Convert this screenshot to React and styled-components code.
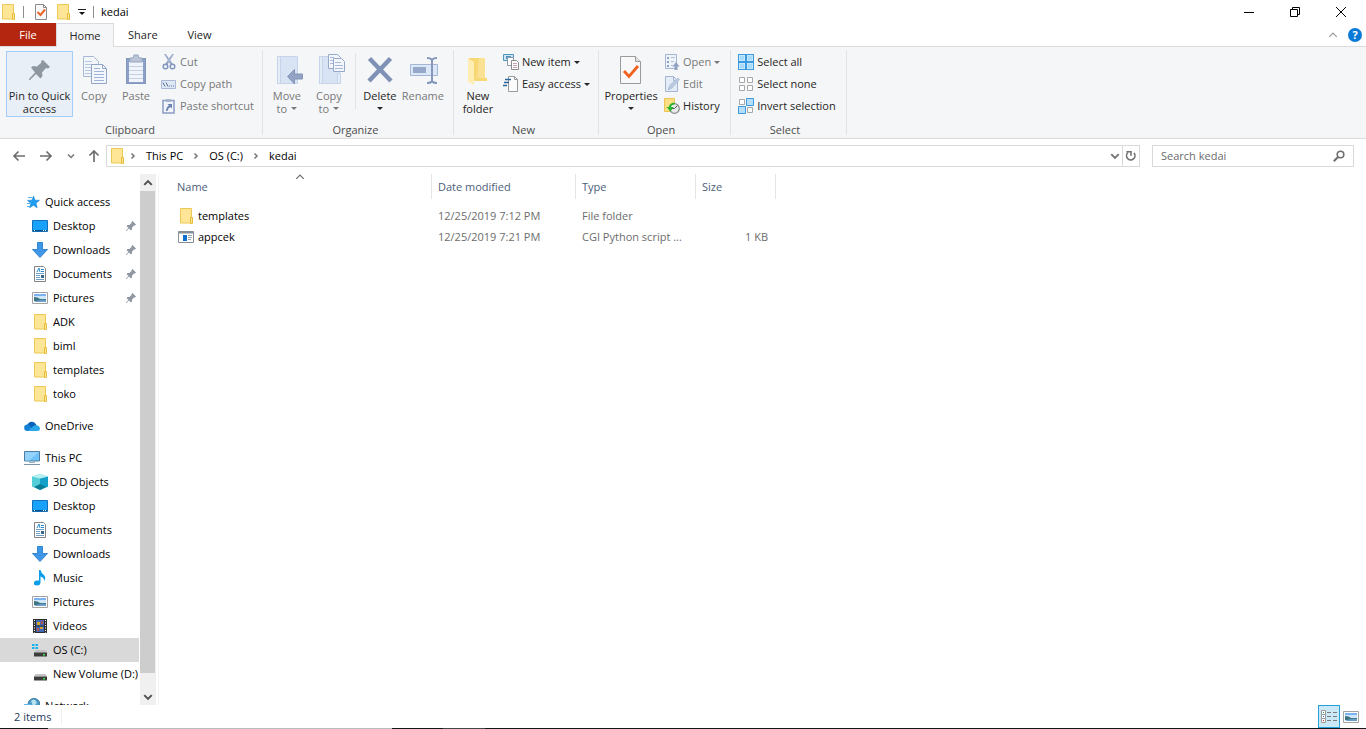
import React from 'react';
import styled, { createGlobalStyle } from 'styled-components';

/* ---------- icons ---------- */

const Svg = ({ w = 16, h = 16, children }) => (
    <svg width={w} height={h} viewBox={`0 0 ${w} ${h}`} fill="none" aria-hidden="true">{children}</svg>
);

const FolderIcon = () => (
    <Svg>
        <path d="M2.5 .5h11v14.5h-11z" fill="#ffe596" stroke="#ecc955" />
        <path d="M12.5 9.5h2v6h-2z" fill="#ffe596" stroke="#e6bc3a" />
    </Svg>
);

const PropsSmallIcon = () => (
    <Svg>
        <path d="M2.5 .5h8l3 3v12h-11z" fill="#f7f8fa" stroke="#8c8c8c" />
        <path d="M10.5 .5v3h3" stroke="#8c8c8c" />
        <path d="M4.5 8l3 3 4.5-5.5" stroke="#ec6526" strokeWidth="2" />
    </Svg>
);

const PinBigIcon = () => (
    <Svg w={32} h={32}>
        <path d="M19 6l7 7-2 1.5-2-.5-4 4.5.5 3.5-2 2.5-4.500-4.500-6 6H5v-1l6-6.500L7 13.500l2-1.500 4 .5 4.500-4L17 7z" fill="#8e979f" />
    </Svg>
);

const PinIcon = () => (
    <Svg w={12} h={12}>
        <path d="M7.5 1L11 4.5l-1 1H9L7 7.5v2l-1 1L4 8.5 1.5 11H1v-.5L3.5 8l-2-2 1-1h2l2-2V2z" fill="#8e979f" />
    </Svg>
);

const CopyIcon = () => (
    <Svg w={32} h={32}>
        <path d="M5.5 2.5h10l5 5v15h-15z" fill="#f3f7fc" stroke="#a8b8d4" />
        <path d="M7 7.5h7M7 10.5h7M7 13.5h6M7 16.5h6M7 19.5h6" stroke="#b4c6e0" />
        <path d="M13.5 10.5h11l4 4v15h-15z" fill="#f3f7fc" stroke="#93a6c8" />
        <path d="M24.5 10.5v4h4" stroke="#93a6c8" />
        <path d="M16 14.5h6M16 17.5h10M16 20.5h10M16 23.5h10M16 26.5h10" stroke="#9fb4d6" />
    </Svg>
);

const PasteIcon = () => (
    <Svg w={32} h={32}>
        <rect x="6.5" y="4.5" width="19" height="25" fill="#8ea2c8" stroke="#8396bd" />
        <path d="M9 8h14v20H9z" fill="#f1f5fb" />
        <path d="M9 12.5h14M9 16.5h14M9 20.5h14M9 24.5h14" stroke="#c3d1e8" />
        <path d="M10 4h3l1-3h4l1 3h3v4H10z" fill="#b9c4d6" stroke="#98a6c2" />
    </Svg>
);

const CutIcon = () => (
    <Svg>
        <path d="M3.5 0h1l7 10-1.5 1zM12.5 0h-1L4.500 10 6 11z" fill="#8c9fc2" stroke="#9aaccb" strokeWidth=".6" />
        <circle cx="4.5" cy="12.5" r="2.3" stroke="#8296be" strokeWidth="1.5" />
        <circle cx="11.5" cy="12.5" r="2.3" stroke="#8296be" strokeWidth="1.5" />
    </Svg>
);

const CopyPathIcon = () => (
    <Svg>
        <path d="M.5 4.5h14v8H.5z" fill="#dfe8f5" stroke="#a9b9d6" />
        <path d="M2 6.5l2 4M5 6.5l2 4M8 10h1M10 10h1M12 10h1" stroke="#5f7199" />
    </Svg>
);

const PasteShortcutIcon = () => (
    <Svg>
        <path d="M2 2.5h11V15H2z" fill="#f1f5fb" stroke="#8a9dc4" strokeWidth="1.5" />
        <path d="M5 1h5v3H5z" fill="#a5b3cc" />
        <path d="M6.5 6H11v4.5L9.500 9Q7 10 6.500 13H5q0-4 3-5.500z" fill="#6c82b0" />
    </Svg>
);

const MoveToIcon = () => (
    <Svg w={32} h={32}>
        <path d="M6.5 2.5h20v27h-20z" fill="#d8e3f4" stroke="#c5d4ea" />
        <path d="M6.5 2.5h3v27h-3z" fill="#e4ecf8" stroke="#c5d4ea" />
        <path d="M16.5 22.5l7-7v4.5h8v5h-8v5z" fill="#93a3c3" stroke="#8495b8" />
    </Svg>
);

const CopyToIcon = () => (
    <Svg w={32} h={32}>
        <path d="M6.5 2.5h20v27h-20z" fill="#d8e3f4" stroke="#c5d4ea" />
        <path d="M6.5 2.5h3v27h-3zM24.5 19.5h3v10h-3z" fill="#e4ecf8" stroke="#c5d4ea" />
        <path d="M15.5 .5h9l3 3v11h-12z" fill="#f3f7fc" stroke="#97aac9" />
        <path d="M20.5 4.5h8l3 3v10h-11z" fill="#f3f7fc" stroke="#97aac9" />
        <path d="M17 3.5h4M17 6.5h3M17 9.5h3M22 8.5h6M22 11.5h8M22 14.5h8" stroke="#a6b9d8" />
    </Svg>
);

const DeleteIcon = () => (
    <Svg w={32} h={32}>
        <path d="M5.5 4.5L27 27M26.5 4.5L5 27" stroke="#7f92b5" strokeWidth="4.5" />
    </Svg>
);

const RenameIcon = () => (
    <Svg w={32} h={32}>
        <path d="M3.5 10.5h27v11h-27z" fill="#dce8f7" stroke="#a3b6d5" />
        <path d="M6 13h13v6H6z" fill="#95a8ca" />
        <path d="M20 4q4 0 5 2 1-2 5-2M25 6v21M20 29q4 0 5-2 1 2 5 2" stroke="#8799ba" strokeWidth="2" />
    </Svg>
);

const NewFolderIcon = () => (
    <Svg w={32} h={32}>
        <path d="M6 4h17v20h2v3H12z" fill="#f8d775" />
        <path d="M17 4h6v20h-8z" fill="#fbe193" />
        <path d="M6 4l6 4v23l-6-3z" fill="#ffeeb4" />
    </Svg>
);

const NewItemIcon = () => (
    <Svg>
        <path d="M.5 .5h10v6H.5z" fill="#cfe6f7" stroke="#4f94bb" />
        <path d="M3 2h5v3H3z" fill="#4f94bb" />
        <path d="M4.5 3.5h6v8h-6z" fill="#fff" stroke="#8b9bab" />
        <path d="M8.5 6.5h5l2 2v7h-7z" fill="#fff" stroke="#8c8c8c" />
        <path d="M10 9.5h4M10 11.5h4M10 13.5h4" stroke="#c5a3ae" />
    </Svg>
);

const EasyAccessIcon = () => (
    <Svg>
        <path d="M5.5 .5h6l3 3v12h-9z" fill="#fbfbfc" stroke="#9a9a9a" />
        <path d="M11.5 .5v3h3" stroke="#9a9a9a" />
        <path d="M2 3.5h6M1 6.5h5M0 9.5h4" stroke="#2c679c" strokeWidth="1.4" />
    </Svg>
);

const PropertiesIcon = () => (
    <Svg w={32} h={32}>
        <path d="M5.5 2.5h15l5 5v22h-20z" fill="#f8f8f9" stroke="#9a9a9a" />
        <path d="M20.5 2.5v5h5" fill="#e4e4e8" stroke="#9a9a9a" />
        <path d="M9 17l5 5.5L23 12" stroke="#f2601c" strokeWidth="2.8" />
    </Svg>
);

const OpenIcon = () => (
    <Svg>
        <path d="M1.5 .5h11v14h-11z" fill="#eef3fb" stroke="#a6b6d2" />
        <path d="M3 3h2v2H3zM3 7h2v2H3zM3 11h2v2H3z" fill="#8fa3c8" />
        <path d="M7 3.5h4M7 7.5h3M7 11.5h2" stroke="#b3c2dc" />
        <path d="M8.5 12.5L12 8l3.5 4.5h-2V16h-3v-3.5z" fill="#91a2c3" />
    </Svg>
);

const EditIcon = () => (
    <Svg>
        <path d="M1.5 .5h8l4 4v11h-12z" fill="#e4ecf7" stroke="#a4b5d3" />
        <path d="M9.5 .5v4h4" stroke="#a4b5d3" />
        <path d="M4 14l2-5 8-7 1.5 1.5L8 12z" fill="#bccbe2" stroke="#a4b5d3" strokeWidth=".7" />
    </Svg>
);

const HistoryIcon = () => (
    <Svg>
        <path d="M.5 .5h10v13H.5z" fill="#fbdf82" stroke="#ebc455" />
        <circle cx="10.5" cy="10.5" r="4.8" fill="#e7e9e8" stroke="#858b8b" strokeWidth="1.2" />
        <path d="M10.5 10.5l3-3M10.5 10.5H8" stroke="#555" />
        <path d="M10.5 4.5Q5 5 5 9H2.5l4 4.5 3-4.5H7q0-2.5 3.5-2.5z" fill="#28b52f" />
    </Svg>
);

const SelectAllIcon = () => (
    <Svg>
        <path d="M0 0h16v16H0z" fill="#3b9ae1" />
        <path d="M1 1h6v6H1zM9 1h6v6H9zM1 9h6v6H1zM9 9h6v6H9z" fill="#c9e7fb" />
        <path d="M2 2h4v4H2zM10 2h4v4h-4zM2 10h4v4H2zM10 10h4v4h-4z" fill="#a8dafa" />
    </Svg>
);

const SelectNoneIcon = () => (
    <Svg>
        <path d="M1.5 1.5h5v5h-5zM9.5 1.5h5v5h-5zM1.5 9.5h5v5h-5zM9.5 9.5h5v5h-5z" fill="#fff" stroke="#a8a8a8" />
    </Svg>
);

const InvertIcon = () => (
    <Svg>
        <path d="M1.5 1.5h5v5h-5zM9.5 9.5h5v5h-5z" fill="#fff" stroke="#a8a8a8" />
        <path d="M8.5 .5h7v7h-7zM.5 8.5h7v7h-7z" fill="#b5dffa" stroke="#3b9ae1" />
    </Svg>
);

const StarIcon = () => (
    <Svg>
        <path d="M9.5 2l1.5 4.2 4.5.1-3.5 2.9 1.2 4.6-3.8-2.5-3.8 2.5 1.3-4.5L3.5 6.4l4.5-.2z" fill="#1f9df0" stroke="#1482d4" strokeWidth=".6" />
        <path d="M4 3.5h4M3 9.5h3M3 12.5h3" stroke="#4fb0f2" />
    </Svg>
);

const DesktopIcon = () => (
    <Svg>
        <path d="M.5 2.5h15v11H.5z" fill="#19a2fb" stroke="#1471b8" />
        <path d="M1 12h14v1H1z" fill="#0a4d86" />
        <path d="M2 12h1v1H2zM11 12h1v1h-1zM13 12h1v1h-1z" fill="#fff" />
    </Svg>
);

const DownloadsIcon = () => (
    <Svg><path d="M5.5 .5h5v7h5L8 15.5.5 7.5h5z" fill="#3d97e6" stroke="#3286d0" /></Svg>
);

const DocumentsIcon = () => (
    <Svg>
        <path d="M2.5 .5h9l2 2v13h-11z" fill="#fff" stroke="#7f8488" />
        <path d="M5 6l2-4 1 4M9 3.5h3M9 5.5h3" stroke="#2b8dd1" />
        <path d="M4 7.5h8M4 9.5h4M4 11.5h4M4 13.5h8" stroke="#6c9fc2" />
        <path d="M9 9h3v3H9z" fill="#35698f" />
    </Svg>
);

const PicturesIcon = () => (
    <Svg>
        <path d="M.5 2.5h15v11H.5z" fill="#fff" stroke="#a3a3a3" />
        <path d="M2 4h12v8H2z" fill="#cfe6fb" />
        <path d="M2 4h12v2H2z" fill="#7ab2f2" />
        <path d="M2 7q4 0 6 2h6v2H2z" fill="#3d7480" />
        <path d="M2 12q6-3 12-2v2z" fill="#6a9fcb" />
    </Svg>
);

const OneDriveIcon = () => (
    <Svg>
        <path d="M3 9q0-3.5 3-5 4-1.5 6.5 3L8 11z" fill="#0a62b8" />
        <circle cx="3.5" cy="9.8" r="3.3" fill="#1380d8" />
        <path d="M4 13l6-5.5q5-1.5 6 3 0 2.5-3 2.5z" fill="#28a8ea" />
    </Svg>
);

const ThisPcIcon = () => (
    <Svg>
        <path d="M.5 1.5h15V11H.5z" fill="#6fc3fa" stroke="#4f7c9c" />
        <path d="M1 2h14L5 10.5H1z" fill="#93d3fc" />
        <path d="M5 12.5h6" stroke="#9db4c4" />
        <path d="M0 14.5h16" stroke="#7e96a8" />
    </Svg>
);

const ObjectsIcon = () => (
    <Svg>
        <path d="M8 0l8 2.5v10L8 16 0 12.5v-10z" fill="#54cfd8" />
        <path d="M8 4.5l8-2v10L8 16z" fill="#139fc8" />
        <path d="M0 2.5L8 0l8 2.5-8 2z" fill="#b5eff0" />
        <path d="M2 13l6-3 6 3-6 3z" fill="#0b7c96" />
    </Svg>
);

const MusicIcon = () => (
    <Svg>
        <path d="M7 0h1.5q.5 3 3.5 5 2.5 3 0 6 .5-3.5-3.5-4.5V12q0 3.5-3.5 3.5T2 13q0-2.5 3-2.5h2z" fill="#0b9dea" />
    </Svg>
);

const VideosIcon = () => (
    <Svg>
        <path d="M1 1h14v14H1z" fill="#2f2f31" />
        <path d="M4 2h8v5.5H4zM4 8.5h8V14H4z" fill="#4268b8" />
        <path d="M5 4h3v3H5zM8 9h3v2H8z" fill="#d9a72e" />
        <path d="M9 3h2v3H9zM5 10h2v3H5z" fill="#b75442" />
        <path d="M2.5 2v13M13.5 2v13" stroke="#fff" strokeDasharray="1 1.5" />
    </Svg>
);

const DriveIcon = ({ system }) => (
    <Svg>
        {system && <path d="M0 2h2.5v2H0zM3.5 2H6v2H3.5zM0 5h2.500v2H0zM3.500 5H6v2H3.500z" fill="#15b3ee" />}
        <path d="M3.5 8h10L15 10.5H2z" fill="#c3c3c3" />
        <path d="M2 10.5h13v4H2z" fill="#3c3c3c" />
        <path d="M11 12h2v1.5h-2z" fill="#3ee34b" />
    </Svg>
);

const NetworkIcon = () => (
    <Svg>
        <circle cx="10" cy="6.5" r="6" fill="#4d9ac6" stroke="#39789f" />
        <path d="M7 3q3-3 5 0t-3 5z" fill="#b7e2f3" />
        <path d="M0 6h7v6H0z" fill="#5fb5e8" />
    </Svg>
);

const ScriptIcon = () => (
    <Svg>
        <path d="M.5 2.5h15v11H.5z" fill="#fff" stroke="#878f96" />
        <path d="M1 3h14v1.5H1z" fill="#878f96" />
        <path d="M5 6h4v6H5z" fill="#0f6fd0" />
        <path d="M10 6.5h4M10 8.5h4M10 10.5h3" stroke="#9da4aa" />
    </Svg>
);

const DetailsIcon = () => (
    <Svg w={18} h={16}>
        <path d="M1.5 1.5h4v4h-4zM1.5 5.5h4v4h-4zM1.5 9.5h4v4h-4z" fill="#fff" stroke="#9a9a9a" />
        <path d="M3 3h1v1H3z" fill="#2a9a46" />
        <path d="M3 7h1v1H3z" fill="#2b6fd6" />
        <path d="M3 11h1v1H3z" fill="#d22b2b" />
        <path d="M7 3.5h4M13 3.5h4M7 7.5h4M13 7.5h4M7 11.5h4M13 11.5h4" stroke="#7b7b7b" />
    </Svg>
);

const Chevron = ({ dir = 'right', size = 8, color = '#767676', weight = 1.5 }) => {
    const paths = {
        right: 'M2.5 1.5L5 4 2.5 6.5',
        down: 'M1 2.5l3 3 3-3',
        up: 'M1 5.5l3-3 3 3',
    };
    return (
        <svg width={size} height={size} viewBox="0 0 8 8" fill="none" aria-hidden="true">
            <path d={paths[dir]} stroke={color} strokeWidth={weight} />
        </svg>
    );
};

const Caret = () => (
    <svg width="6" height="3" viewBox="0 0 6 3" aria-hidden="true"><path d="M0 0h6L3 3z" fill="currentColor" /></svg>
);

/* ---------- data ---------- */

const quickAccess = [
    { name: 'Desktop', icon: <DesktopIcon />, pinned: true },
    { name: 'Downloads', icon: <DownloadsIcon />, pinned: true },
    { name: 'Documents', icon: <DocumentsIcon />, pinned: true },
    { name: 'Pictures', icon: <PicturesIcon />, pinned: true },
    { name: 'ADK', icon: <FolderIcon /> },
    { name: 'biml', icon: <FolderIcon /> },
    { name: 'templates', icon: <FolderIcon /> },
    { name: 'toko', icon: <FolderIcon /> },
];

const thisPc = [
    { name: '3D Objects', icon: <ObjectsIcon /> },
    { name: 'Desktop', icon: <DesktopIcon /> },
    { name: 'Documents', icon: <DocumentsIcon /> },
    { name: 'Downloads', icon: <DownloadsIcon /> },
    { name: 'Music', icon: <MusicIcon /> },
    { name: 'Pictures', icon: <PicturesIcon /> },
    { name: 'Videos', icon: <VideosIcon /> },
    { name: 'OS (C:)', icon: <DriveIcon system />, selected: true },
    { name: 'New Volume (D:)', icon: <DriveIcon /> },
];

const files = [
    { name: 'templates', icon: <FolderIcon />, date: '12/25/2019 7:12 PM', type: 'File folder', size: '' },
    { name: 'appcek', icon: <ScriptIcon />, date: '12/25/2019 7:21 PM', type: 'CGI Python script ...', size: '1 KB' },
];

/* ---------- pieces ---------- */

const LargeButton = ({ icon, lines, menu, ...rest }) => (
    <Large {...rest}>
        {icon}
        {lines.map((line, i) => (
            <Line key={line}>{line}{menu && i > 0 && <Caret />}</Line>
        ))}
        {menu && lines.length === 1 && <Line><Caret /></Line>}
    </Large>
);

const SmallButton = ({ icon, text, menu, disabled }) => (
    <Small disabled={disabled}>
        {icon}<span>{text}</span>{menu && <Caret />}
    </Small>
);

const RibbonGroup = ({ title, roomy, children }) => (
    <Group $roomy={roomy}>
        <GroupBody>{children}</GroupBody>
        <GroupTitle>{title}</GroupTitle>
    </Group>
);

const TreeItem = ({ item, level }) => (
    <TreeLink href="#" $level={level} $selected={item.selected}>
        {item.icon}
        <TreeText>{item.name}</TreeText>
        {item.pinned && <PinIcon />}
    </TreeLink>
);

const App = () => {
    return (
        <Window>
            <GlobalStyle />
            <TitleBar>
                <FolderIcon />
                <TitleRule />
                <ToolButton aria-label="Properties"><PropsSmallIcon /></ToolButton>
                <ToolButton aria-label="New folder"><FolderIcon /></ToolButton>
                <ToolButton aria-label="Customize toolbar" $narrow>
                    <Svg w={8} h={8}><path d="M0 1.5h8" stroke="#222" /><path d="M1 4h6L4 7z" fill="#111" /></Svg>
                </ToolButton>
                <TitleRule $tight />
                <Title>kedai</Title>
                <WindowButton aria-label="Minimize"><Svg w={10} h={10}><path d="M0 5.5h10" stroke="#000" /></Svg></WindowButton>
                <WindowButton aria-label="Restore">
                    <Svg w={10} h={10}><path d="M.5 2.5h7v7h-7zM2.5 2.5v-2h7v7h-2" stroke="#000" /></Svg>
                </WindowButton>
                <WindowButton aria-label="Close"><Svg w={10} h={10}><path d="M0 0l10 10M10 0L0 10" stroke="#000" /></Svg></WindowButton>
            </TitleBar>

            <Tabs>
                <Tab $file>File</Tab>
                <Tab $active>Home</Tab>
                <Tab>Share</Tab>
                <Tab>View</Tab>
                <TabTools>
                    <IconButton aria-label="Collapse ribbon"><Chevron dir="up" size={10} color="#9b9b9b" weight={1} /></IconButton>
                    <Help aria-label="Help">?</Help>
                </TabTools>
            </Tabs>

            <Ribbon>
                <RibbonGroup title="Clipboard">
                    <LargeButton icon={<PinBigIcon />} lines={['Pin to Quick', 'access']} $width={67} $active />
                    <LargeButton icon={<CopyIcon />} lines={['Copy']} disabled />
                    <LargeButton icon={<PasteIcon />} lines={['Paste']} disabled />
                    <Stack>
                        <SmallButton icon={<CutIcon />} text="Cut" disabled />
                        <SmallButton icon={<CopyPathIcon />} text="Copy path" disabled />
                        <SmallButton icon={<PasteShortcutIcon />} text="Paste shortcut" disabled />
                    </Stack>
                </RibbonGroup>
                <RibbonGroup title="Organize">
                    <LargeButton icon={<MoveToIcon />} lines={['Move', 'to']} menu disabled />
                    <LargeButton icon={<CopyToIcon />} lines={['Copy', 'to']} menu disabled />
                    <Divider />
                    <LargeButton icon={<DeleteIcon />} lines={['Delete']} menu />
                    <LargeButton icon={<RenameIcon />} lines={['Rename']} $width={44} disabled />
                </RibbonGroup>
                <RibbonGroup title="New">
                    <LargeButton icon={<NewFolderIcon />} lines={['New', 'folder']} />
                    <Stack>
                        <SmallButton icon={<NewItemIcon />} text="New item" menu />
                        <SmallButton icon={<EasyAccessIcon />} text="Easy access" menu />
                    </Stack>
                </RibbonGroup>
                <RibbonGroup title="Open" roomy>
                    <LargeButton icon={<PropertiesIcon />} lines={['Properties']} menu $width={58} />
                    <Stack>
                        <SmallButton icon={<OpenIcon />} text="Open" menu disabled />
                        <SmallButton icon={<EditIcon />} text="Edit" disabled />
                        <SmallButton icon={<HistoryIcon />} text="History" />
                    </Stack>
                </RibbonGroup>
                <RibbonGroup title="Select" roomy>
                    <Stack>
                        <SmallButton icon={<SelectAllIcon />} text="Select all" />
                        <SmallButton icon={<SelectNoneIcon />} text="Select none" />
                        <SmallButton icon={<InvertIcon />} text="Invert selection" />
                    </Stack>
                </RibbonGroup>
            </Ribbon>

            <NavBar>
                <NavButtons>
                    <IconButton aria-label="Back"><Svg w={14} h={12}><path d="M13 6H2M6.5 1.5L2 6l4.5 4.5" stroke="#6e6e6e" strokeWidth="1.7" /></Svg></IconButton>
                    <IconButton aria-label="Forward"><Svg w={14} h={12}><path d="M1 6h11M7.5 1.5L12 6l-4.5 4.5" stroke="#6e6e6e" strokeWidth="1.7" /></Svg></IconButton>
                    <IconButton aria-label="Recent locations"><Chevron dir="down" /></IconButton>
                    <IconButton aria-label="Up"><Svg w={12} h={14}><path d="M6 13V2M1.5 6.5L6 2l4.5 4.5" stroke="#6e6e6e" strokeWidth="1.7" /></Svg></IconButton>
                </NavButtons>
                <AddressBox>
                    <FolderIcon />
                    <Crumbs>
                        <Chevron />
                        <Crumb>This PC</Crumb>
                        <Chevron />
                        <Crumb>OS (C:)</Crumb>
                        <Chevron />
                        <Crumb>kedai</Crumb>
                    </Crumbs>
                    <AddressTools>
                        <IconButton aria-label="Previous locations"><Chevron dir="down" size={10} weight={1.6} /></IconButton>
                        <Refresh aria-label="Refresh">
                            <Svg w={12} h={12}>
                                <path d="M3 2.5a4.2 4.2 0 1 0 6 .5" stroke="#6e6e6e" strokeWidth="1.6" />
                                <path d="M1.5 1.800h4.500v4" stroke="#6e6e6e" strokeWidth="1.5" />
                            </Svg>
                        </Refresh>
                    </AddressTools>
                </AddressBox>
                <SearchBox>
                    <input type="search" aria-label="Search kedai" placeholder="Search kedai" />
                    <Svg w={12} h={12}>
                        <circle cx="7.5" cy="4.5" r="3.3" stroke="#6e6e6e" strokeWidth="1.6" />
                        <path d="M5 7L.8 11.2" stroke="#6e6e6e" strokeWidth="2" />
                    </Svg>
                </SearchBox>
            </NavBar>

            <Body>
                <Sidebar>
                    <Tree>
                        <TreeGroup>
                            <TreeItem item={{ name: 'Quick access', icon: <StarIcon /> }} />
                            {quickAccess.map(item => <TreeItem key={item.name} item={item} level={1} />)}
                        </TreeGroup>
                        <TreeGroup>
                            <TreeItem item={{ name: 'OneDrive', icon: <OneDriveIcon /> }} />
                        </TreeGroup>
                        <TreeGroup>
                            <TreeItem item={{ name: 'This PC', icon: <ThisPcIcon /> }} />
                            {thisPc.map(item => <TreeItem key={item.name} item={item} level={1} />)}
                        </TreeGroup>
                        <TreeGroup>
                            <TreeItem item={{ name: 'Network', icon: <NetworkIcon /> }} />
                        </TreeGroup>
                    </Tree>
                    <ScrollBar>
                        <ScrollButton aria-label="Scroll up"><Chevron dir="up" size={10} color="#505050" weight={1.6} /></ScrollButton>
                        <ScrollTrack><ScrollThumb /></ScrollTrack>
                        <ScrollButton aria-label="Scroll down"><Chevron dir="down" size={10} color="#505050" weight={1.6} /></ScrollButton>
                    </ScrollBar>
                </Sidebar>
                <Content>
                    <FileTable>
                        <colgroup>
                            <Column $width={273} />
                            <Column $width={144} />
                            <Column $width={120} />
                            <Column $width={80} />
                        </colgroup>
                        <thead>
                            <tr>
                                <HeadCell $first>
                                    Name
                                    <SortMark><Chevron dir="up" size={10} color="#6d6d6d" weight={1} /></SortMark>
                                </HeadCell>
                                <HeadCell>Date modified</HeadCell>
                                <HeadCell>Type</HeadCell>
                                <HeadCell>Size</HeadCell>
                            </tr>
                        </thead>
                        <tbody>
                            {files.map(file => (
                                <tr key={file.name}>
                                    <NameCell><FileName>{file.icon}{file.name}</FileName></NameCell>
                                    <Cell>{file.date}</Cell>
                                    <Cell>{file.type}</Cell>
                                    <Cell $right>{file.size}</Cell>
                                </tr>
                            ))}
                        </tbody>
                    </FileTable>
                </Content>
            </Body>

            <StatusBar>
                <StatusText>2 items</StatusText>
                <ViewButton aria-label="Details view" $active><DetailsIcon /></ViewButton>
                <ViewButton aria-label="Thumbnail view"><PicturesIcon /></ViewButton>
            </StatusBar>
            <TaskbarEdge />
        </Window>
    );
};

export default App;

/* ---------- styles ---------- */

const GlobalStyle = createGlobalStyle`
    * {
        box-sizing: border-box;
    }

    body {
        margin: 0;
        background: #fff;
        color: #000;
        font-family: 'Open Sans', 'Noto Sans', sans-serif;
        font-size: 11px;
        line-height: 16px;
    }

    button, input {
        margin: 0;
        padding: 0;
        border: 0;
        background: none;
        color: inherit;
        font: inherit;
    }

    svg {
        display: block;
        flex: none;
    }
`;

const Window = styled.div`
    display: flex;
    flex-direction: column;
    height: 100vh;
    overflow: hidden;
`;

const TitleBar = styled.header`
    display: flex;
    align-items: center;
    height: 23px;
    padding-right: 2px;
`;

const TitleRule = styled.span`
    width: 1px;
    height: 12px;
    margin: ${props => props.$tight ? '0px 7px 0px 3px' : '0px 6px 0px 7px'};
    background: #8d8d8d;
`;

const ToolButton = styled.button`
    display: flex;
    align-items: center;
    justify-content: center;
    width: ${props => props.$narrow ? '16px' : '22px'};
    height: 22px;
`;

const Title = styled.span`
    flex: 1;
`;

const WindowButton = styled.button`
    display: flex;
    align-items: center;
    justify-content: center;
    width: 46px;
    height: 22px;
`;

const Tabs = styled.nav`
    display: flex;
    height: 24px;
    border-bottom: 1px solid #dadbdc;
`;

const Tab = styled.button`
    height: ${props => props.$active ? '24px' : '23px'};
    min-width: ${props => props.$active ? '58px' : '56px'};
    padding: 0px 14px;
    color: ${props => props.$file ? '#fff' : '#262626'};
    background: ${props => props.$file ? '#b4260f' : props.$active ? '#f5f6f7' : 'transparent'};

    ${props => props.$active && `
        padding: 0px 12px;
        border: 1px solid #dadbdc;
        border-bottom: 0;
    `}
`;

const TabTools = styled.div`
    display: flex;
    align-items: center;
    gap: 10px;
    margin-left: auto;
    padding-right: 4px;
`;

const IconButton = styled.button`
    display: flex;
    align-items: center;
    justify-content: center;
`;

const Help = styled.button`
    width: 14px;
    height: 14px;
    border-radius: 50%;
    background: #0b79d6;
    color: #fff;
    font-weight: 700;
    line-height: 14px;
`;

const Ribbon = styled.div`
    display: flex;
    flex: none;
    height: 92px;
    padding-left: 3px;
    background: #f5f6f7;
    border-bottom: 1px solid #dadbdc;
    color: #262626;
`;

const Group = styled.section`
    display: flex;
    flex-direction: column;
    margin: 3px 0px;
    padding: 1px ${props => props.$roomy ? '10px' : '8px'} 0px 3px;
    border-right: 1px solid #e2e3e4;
`;

const GroupBody = styled.div`
    display: flex;
    flex: none;
    height: 70px;
`;

const GroupTitle = styled.div`
    text-align: center;
    color: #4c4c4c;
    line-height: 18px;
`;

const Large = styled.button`
    display: flex;
    flex-direction: column;
    align-items: center;
    width: ${props => props.$width || 42}px;
    height: 66px;
    padding-top: 3px;
    white-space: nowrap;

    &:disabled {
        color: #777879;
    }

    ${props => props.$active && `
        padding-top: 2px;
        background: #e8eff7;
        border: 1px solid #a4cef9;
    `}

    svg + span {
        margin-top: 3px;
    }
`;

const Line = styled.span`
    display: flex;
    align-items: center;
    gap: 4px;
    height: 13px;
    line-height: 13px;
`;

const Divider = styled.span`
    width: 1px;
    height: 56px;
    margin: 2px 3px 0px 5px;
    background: #e2e3e4;
`;

const Stack = styled.div`
    display: flex;
    flex-direction: column;
    padding-left: 4px;
`;

const Small = styled.button`
    display: flex;
    align-items: center;
    gap: 3px;
    height: 22px;
    white-space: nowrap;

    &:disabled {
        color: #777879;
    }
`;

const NavBar = styled.div`
    display: flex;
    align-items: center;
    height: 35px;
    padding: 0px 12px 2px 0px;
`;

const NavButtons = styled.div`
    display: flex;
    align-items: center;
    justify-content: space-between;
    width: 100px;
    margin-right: 6px;
    padding-left: 12px;
`;

const AddressBox = styled.div`
    display: flex;
    align-items: center;
    gap: 4px;
    flex: 1;
    height: 22px;
    padding-left: 2px;
    border: 1px solid #d9d9d9;
`;

const Crumbs = styled.div`
    display: flex;
    align-items: center;
    gap: 9px;
`;

const Crumb = styled.button`
    white-space: nowrap;
`;

const AddressTools = styled.div`
    display: flex;
    align-items: center;
    gap: 2px;
    height: 100%;
    margin-left: auto;
`;

const Refresh = styled(IconButton)`
    width: 17px;
    height: 100%;
    border-left: 1px solid #d9d9d9;
`;

const SearchBox = styled.div`
    display: flex;
    align-items: center;
    width: 202px;
    height: 22px;
    margin-left: 12px;
    padding: 0px 8px;
    border: 1px solid #d9d9d9;

    input {
        flex: 1;
        min-width: 0;
        outline: none;
    }

    input::placeholder {
        color: #6d6d6d;
        opacity: 1;
    }
`;

const Body = styled.main`
    display: flex;
    flex: 1;
    min-height: 0;
`;

const Sidebar = styled.aside`
    display: flex;
    width: 159px;
    padding-right: 2px;
    border-right: 1px solid #f3f3f3;
`;

const Tree = styled.nav`
    flex: 1;
    min-width: 0;
    margin-right: 1px;
    padding-top: 16px;
    overflow: hidden;
`;

const TreeGroup = styled.div`
    margin-bottom: 8px;
`;

const TreeLink = styled.a`
    display: flex;
    align-items: center;
    gap: 5px;
    height: 24px;
    padding: 0px 2px 0px ${props => props.$level ? '32px' : '24px'};
    background: ${props => props.$selected ? '#d9d9d9' : 'transparent'};
    color: #000;
    text-decoration: none;
    white-space: nowrap;
`;

const TreeText = styled.span`
    flex: 1;
`;

const ScrollBar = styled.div`
    display: flex;
    flex-direction: column;
    width: 16px;
    background: #f0f0f0;
`;

const ScrollButton = styled(IconButton)`
    height: 17px;
`;

const ScrollTrack = styled.div`
    flex: 1;
    padding-right: 1px;
`;

const ScrollThumb = styled.div`
    height: 97%;
    background: #cdcdcd;
`;

const Content = styled.section`
    flex: 1;
`;

const FileTable = styled.table`
    table-layout: fixed;
    width: 617px;
    border-collapse: separate;
    border-spacing: 0;

    tbody::before {
        content: '';
        display: block;
        height: 6px;
    }
`;

const Column = styled.col`
    width: ${props => props.$width}px;
`;

const HeadCell = styled.th`
    position: relative;
    height: 25px;
    padding: 0px 6px 0px ${props => props.$first ? '18px' : '6px'};
    border-right: 1px solid #e5e5e5;
    color: #4c607a;
    font-weight: 400;
    text-align: left;
`;

const SortMark = styled.span`
    position: absolute;
    top: -2px;
    left: 50%;
`;

const Cell = styled.td`
    height: 21px;
    padding: 0px 8px 0px 6px;
    color: #6d6d6d;
    text-align: ${props => props.$right ? 'right' : 'left'};
    white-space: nowrap;
`;

const NameCell = styled(Cell)`
    padding-left: 19px;
    color: #000;
`;

const FileName = styled.div`
    display: flex;
    align-items: center;
    gap: 4px;
`;

const StatusBar = styled.footer`
    display: flex;
    align-items: center;
    height: 23px;
    padding-right: 4px;
    color: #1e395b;
`;

const StatusText = styled.span`
    padding: 0px 10px 0px 14px;
    margin-right: auto;
    border-right: 1px solid #f0f0f0;
`;

const ViewButton = styled(IconButton)`
    width: 22px;
    height: 23px;
    border: 1px solid ${props => props.$active ? '#26a0da' : 'transparent'};
    background: ${props => props.$active ? '#cbe8f6' : 'transparent'};
`;

const TaskbarEdge = styled.div`
    flex: none;
    height: 1px;
    background: linear-gradient(90deg, #15151a 0px 48px, #bcbcbc 48px 392px, #15151a 392px 443px, #44444a 443px 485px, #15151a 485px);
`;
